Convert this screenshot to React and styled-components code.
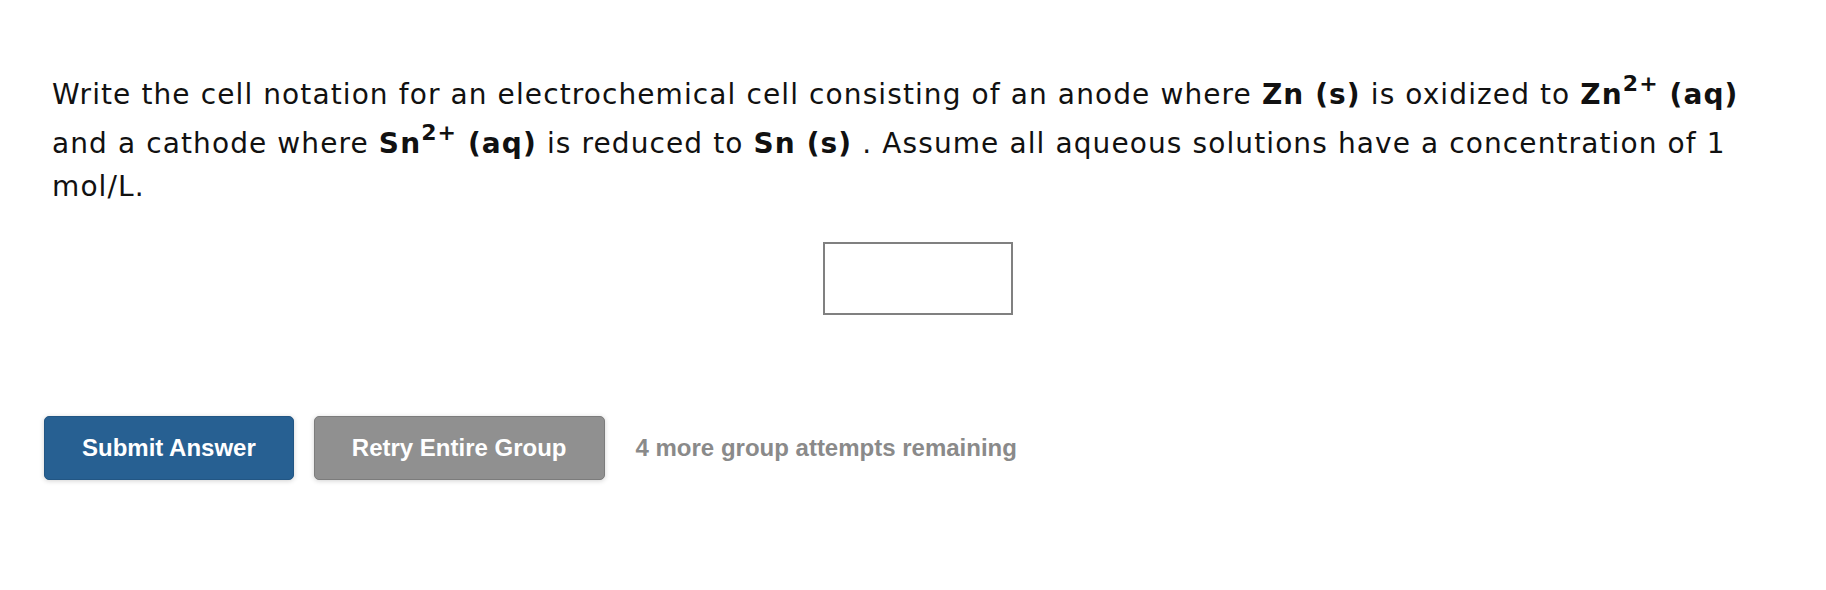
import React from "react";
import styled, { createGlobalStyle } from "styled-components";

const GlobalStyle = createGlobalStyle`
  html, body {
    margin: 0;
    padding: 0;
    background: #ffffff;
  }
`;

const Page = styled.div`
  width: 1826px;
  height: 590px;
  box-sizing: border-box;
  padding: 67px 44px 0 44px;
`;

const Question = styled.p`
  margin: 0 8px;
  font-family: "DejaVu Sans", Verdana, sans-serif;
  font-size: 28px;
  letter-spacing: 1.1px;
  line-height: 43px;
  color: #111111;
`;

const Chem = styled.b`
  font-weight: bold;
`;

const Sup = styled.sup`
  font-size: 22px;
  line-height: 34px;
  vertical-align: 13px;
`;

const AnswerRow = styled.div`
  display: flex;
  justify-content: center;
  padding-left: 10px;
  margin-top: 34px;
`;

const AnswerBox = styled.input`
  width: 190px;
  height: 73px;
  box-sizing: border-box;
  border: 2px solid #808080;
  border-radius: 0;
  background: #ffffff;
  outline: none;
  padding: 0 8px;
  font-family: "DejaVu Sans", sans-serif;
  font-size: 22px;
`;

const Actions = styled.div`
  display: flex;
  align-items: center;
  margin-top: 101px;
`;

const Button = styled.button`
  height: 64px;
  padding: 0 37px;
  margin-right: ${(p) => p.$gap || 20}px;
  border: 1px solid ${(p) => (p.$variant === "grey" ? "#7c7c7c" : "#225684")};
  border-radius: 5px;
  background: ${(p) => (p.$variant === "grey" ? "#909090" : "#276092")};
  color: #ffffff;
  font-family: "Liberation Sans", Arial, sans-serif;
  font-weight: bold;
  font-size: 24px;
  box-shadow: 0 1px 5px rgba(0, 0, 0, 0.18);
  cursor: pointer;
`;

const Attempts = styled.span`
  font-family: "Liberation Sans", Arial, sans-serif;
  font-weight: bold;
  font-size: 24px;
  color: #8a8a8a;
`;

export default function App() {
  return (
    <>
      <GlobalStyle />
      <Page>
        <Question>
          Write the cell notation for an electrochemical cell consisting of an
          anode where <Chem>Zn (s)</Chem> is oxidized to{" "}
          <Chem>
            Zn<Sup>2+</Sup> (aq)
          </Chem>{" "}
          and a cathode where{" "}
          <Chem>
            Sn<Sup>2+</Sup> (aq)
          </Chem>{" "}
          is reduced to <Chem>Sn (s)</Chem> . Assume all aqueous solutions have
          a concentration of 1 mol/L.
        </Question>
        <AnswerRow>
          <AnswerBox type="text" aria-label="cell notation" />
        </AnswerRow>
        <Actions>
          <Button>Submit Answer</Button>
          <Button $variant="grey" $gap={31}>
            Retry Entire Group
          </Button>
          <Attempts>4 more group attempts remaining</Attempts>
        </Actions>
      </Page>
    </>
  );
}
